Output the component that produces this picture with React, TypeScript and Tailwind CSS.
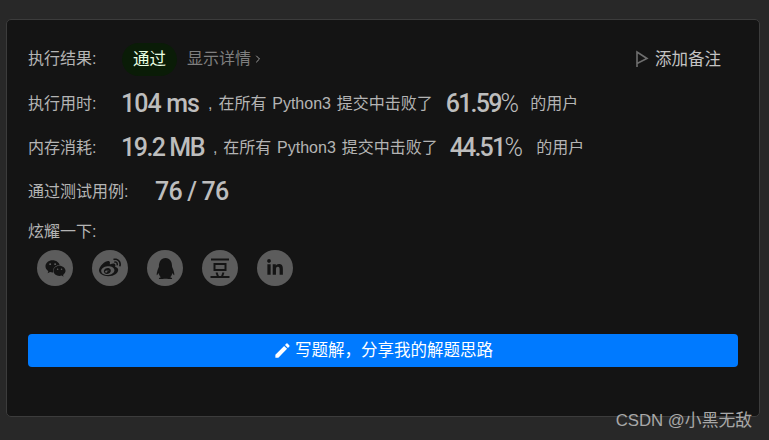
import { ChevronRight } from 'lucide-react';
import { FaWeixin, FaWeibo, FaQq, FaLinkedinIn } from 'react-icons/fa';
import { MdEdit } from 'react-icons/md';
import type { ReactNode } from 'react';

const cjk = 'font-["Liberation_Sans","Noto_Sans_CJK_SC",sans-serif]';
const num = 'font-["Roboto","Noto_Sans",sans-serif]';

function Douban() {
  return (
    <svg viewBox="0 0 24 24" className="w-[24px] h-[24px]" fill="none" stroke="#141414" strokeWidth="2">
      <path d="M3 3.5h18M6.5 8h11v6h-11zM8.5 16.5l1.5 4M15.5 16.5l-1.5 4M2.5 21h19" />
    </svg>
  );
}

function Share({ children }: { children: ReactNode }) {
  return (
    <div className="w-9 h-9 rounded-full bg-[#5c5c5c] flex items-center justify-center text-[#141414]">
      {children}
    </div>
  );
}

type StatRowProps = { label: string; value: string; valueClass: string; pct: string; pctClass: string; userClass: string };

function StatRow({ label, value, valueClass, pct, pctClass, userClass }: StatRowProps) {
  return (
    <div className="h-[44px] flex items-center text-[#b4b4b4] text-[16px]">
      <span className="w-[93px] shrink-0">{label}</span>
      <span className={`${num} text-[25px] font-medium text-[#bdbdbd] whitespace-pre ${valueClass}`}>{value}</span>
      <span className="ml-[9px] [word-spacing:1.4px]">, 在所有 Python3 提交中击败了</span>
      <span className={`${num} text-[25px] font-medium text-[#bdbdbd] tracking-[-1.8px] ${pctClass}`}>
        {pct}
        <span className="font-light">%</span>
      </span>
      <span className={userClass}>的用户</span>
    </div>
  );
}

export default function App() {
  return (
    <div className={`${cjk} w-[769px] h-[440px] bg-[#282828] relative overflow-hidden pt-[19px] pl-[6px] pr-[9px]`}>
      <div className="h-[398px] bg-[#141414] border border-[#3c3c3c] rounded-[5px] pt-[20px] px-[21px]">
        <div className="h-[38px] mb-[4px] flex items-center text-[16px]">
          <span className="w-[94px] text-[#b4b4b4]">执行结果:</span>
          <span className="w-[55px] h-[33px] rounded-full bg-[#0a1c07] text-[#eaffe4] text-[16.5px] flex items-center justify-center">
            通过
          </span>
          <span className="ml-[10px] text-[#7f7f7f]">显示详情</span>
          <ChevronRight className="w-3 h-3 ml-[1px] text-[#a0a0a0]" />
          <div className="ml-auto mr-[17px] flex items-center text-[#c4c4c4] text-[16.5px]">
            <svg viewBox="0 0 14 18" className="w-[14px] h-[18px] mr-[6px]" fill="none" stroke="#6e6e6e" strokeWidth="1.6">
              <path d="M2 17V2l10 6.5L2 13.5" />
            </svg>
            添加备注
          </div>
        </div>
        <StatRow label="执行用时:" value="104 ms" valueClass="tracking-[-0.9px]" pct="61.59" pctClass="ml-[13px]" userClass="ml-[13px]" />
        <StatRow label="内存消耗:" value="19.2 MB" valueClass="tracking-[-1.5px]" pct="44.51" pctClass="ml-[12px]" userClass="ml-[15px]" />
        <div className="h-[44px] flex items-center text-[#b4b4b4] text-[16px]">
          <span className="w-[127px] shrink-0">通过测试用例:</span>
          <span className={`${num} text-[25px] font-medium text-[#bdbdbd] whitespace-pre tracking-[-0.8px]`}>76 / 76</span>
        </div>
        <div className="text-[16px] text-[#b4b4b4] mt-[7px] leading-[22px]">炫耀一下:</div>
        <div className="flex gap-[19px] pl-[9px] mt-[7px]">
          <Share><FaWeixin className="w-[21px] h-[21px]" /></Share>
          <Share><FaWeibo className="w-[22px] h-[22px]" /></Share>
          <Share><FaQq className="w-[19px] h-[21px]" /></Share>
          <Share><Douban /></Share>
          <Share><FaLinkedinIn className="w-[18px] h-[18px]" /></Share>
        </div>
        <button className="mt-[48px] w-full h-[33px] rounded-[4px] bg-[#007aff] text-white text-[16.5px] flex items-center justify-center">
          <MdEdit className="w-[19px] h-[19px] mr-[3px]" />
          写题解，分享我的解题思路
        </button>
      </div>
      <span className="absolute right-[17px] top-[410px] text-[16.8px] leading-[22px] text-[#a8a8a8]">CSDN @小黑无敌</span>
    </div>
  );
}
